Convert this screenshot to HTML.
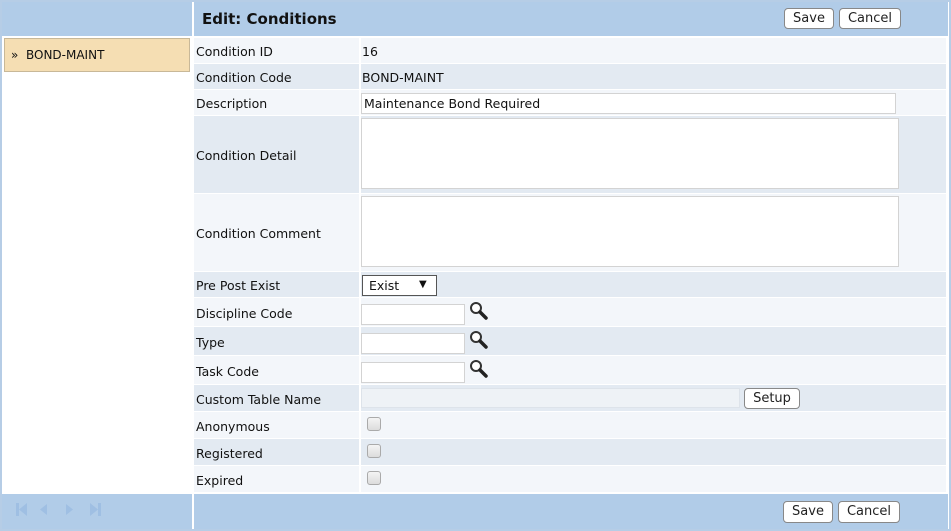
<!DOCTYPE html><html><head><style>
*{box-sizing:border-box}
body{margin:0;width:951px;height:531px;background:#fff;font-family:"DejaVu Sans",Verdana,sans-serif;font-size:12.5px;color:#111;position:relative;overflow:hidden}
.a{position:absolute}
.L{background:#f3f6fa}.D{background:#e3eaf2}
.lab{position:absolute;left:196px;margin-top:1px}
.v{margin-top:1px}
.btn{position:absolute;border:1px solid #888;border-radius:4px;background:#fff;font-size:13px;text-align:center;line-height:20px;color:#222}
.inp{position:absolute;border:1px solid #d3d3d3;background:#fff}
.cb{position:absolute;left:367px;width:14px;height:14px;border:1px solid #aaa;border-radius:3px;background:linear-gradient(#f4f4f4,#dcdcdc)}
</style></head><body>
<div class="a" style="left:0;top:0;width:951px;height:531px;border:2px solid #b6cde6"></div>
<div class="a" style="left:2px;top:2px;width:190px;height:34px;background:#b1cce8"></div>
<div class="a" style="left:194px;top:2px;width:754px;height:34px;background:#b1cce8"></div>
<div class="a" style="left:202px;top:10px;font-weight:bold;font-size:15px">Edit: Conditions</div>
<div class="btn" style="left:784px;top:8px;width:50px;height:21px">Save</div>
<div class="btn" style="left:839px;top:8px;width:62px;height:21px">Cancel</div>
<div class="a" style="left:4px;top:38px;width:186px;height:34px;background:#f5deb3;border:1px solid #c8b898"></div>
<div class="a" style="left:11px;top:48px;font-size:12px">»&nbsp; BOND-MAINT</div>
<div class="a" style="left:2px;top:494px;width:190px;height:35px;background:#b1cce8"></div>
<div class="a" style="left:194px;top:494px;width:754px;height:35px;background:#b1cce8"></div>
<svg class="a" style="left:14px;top:502px" width="90" height="16"><g fill="#9fbfe3"><rect x="2" y="1" width="3" height="13"/><path d="M13 1V14L5 7.5Z"/><path d="M33 2V13L26 7.5Z"/><path d="M52 2V13L59 7.5Z"/><path d="M76 1V14L84 7.5Z"/><rect x="84" y="1" width="3" height="13"/></g></svg>
<div class="btn" style="left:783px;top:501px;width:50px;height:22px">Save</div>
<div class="btn" style="left:838px;top:501px;width:62px;height:22px">Cancel</div>

<div class="a L" style="left:194px;top:38px;width:165px;height:25px"></div><div class="a L" style="left:361px;top:38px;width:585px;height:25px"></div>
<div class="a D" style="left:194px;top:64px;width:165px;height:25px"></div><div class="a D" style="left:361px;top:64px;width:585px;height:25px"></div>
<div class="a L" style="left:194px;top:90px;width:165px;height:25px"></div><div class="a L" style="left:361px;top:90px;width:585px;height:25px"></div>
<div class="a D" style="left:194px;top:116px;width:165px;height:77px"></div><div class="a D" style="left:361px;top:116px;width:585px;height:77px"></div>
<div class="a L" style="left:194px;top:194px;width:165px;height:77px"></div><div class="a L" style="left:361px;top:194px;width:585px;height:77px"></div>
<div class="a D" style="left:194px;top:272px;width:165px;height:25px"></div><div class="a D" style="left:361px;top:272px;width:585px;height:25px"></div>
<div class="a L" style="left:194px;top:298px;width:165px;height:28px"></div><div class="a L" style="left:361px;top:298px;width:585px;height:28px"></div>
<div class="a D" style="left:194px;top:327px;width:165px;height:28px"></div><div class="a D" style="left:361px;top:327px;width:585px;height:28px"></div>
<div class="a L" style="left:194px;top:356px;width:165px;height:28px"></div><div class="a L" style="left:361px;top:356px;width:585px;height:28px"></div>
<div class="a D" style="left:194px;top:385px;width:165px;height:26px"></div><div class="a D" style="left:361px;top:385px;width:585px;height:26px"></div>
<div class="a L" style="left:194px;top:412px;width:165px;height:26px"></div><div class="a L" style="left:361px;top:412px;width:585px;height:26px"></div>
<div class="a D" style="left:194px;top:439px;width:165px;height:26px"></div><div class="a D" style="left:361px;top:439px;width:585px;height:26px"></div>
<div class="a L" style="left:194px;top:466px;width:165px;height:26px"></div><div class="a L" style="left:361px;top:466px;width:585px;height:26px"></div>

<div class="lab" style="top:43px">Condition ID</div><div class="a v" style="left:362px;top:43px">16</div>
<div class="lab" style="top:69px">Condition Code</div><div class="a v" style="left:362px;top:69px">BOND-MAINT</div>
<div class="lab" style="top:95px">Description</div>
<div class="inp" style="left:361px;top:93px;width:535px;height:21px;padding:2px 0 0 2px">Maintenance Bond Required</div>
<div class="lab" style="top:147px">Condition Detail</div>
<div class="inp" style="left:361px;top:118px;width:538px;height:71px"></div>
<div class="lab" style="top:225px">Condition Comment</div>
<div class="inp" style="left:361px;top:196px;width:538px;height:71px"></div>
<div class="lab" style="top:277px">Pre Post Exist</div>
<div class="a" style="left:362px;top:275px;width:75px;height:21px;border:1px solid #555;background:#fff;padding:2px 0 0 6px">Exist<span style="position:absolute;left:56px;top:3px;font-size:10px">▼</span></div>
<div class="lab" style="top:305px">Discipline Code</div>
<div class="inp" style="left:361px;top:304px;width:104px;height:21px"></div>
<div class="lab" style="top:334px">Type</div>
<div class="inp" style="left:361px;top:333px;width:104px;height:21px"></div>
<div class="lab" style="top:363px">Task Code</div>
<div class="inp" style="left:361px;top:362px;width:104px;height:21px"></div>
<svg class="a" style="left:469px;top:301px" width="20" height="20"><circle cx="7" cy="7" r="5" fill="#fff" stroke="#333" stroke-width="2"/><path d="M11 11L17 17" stroke="#222" stroke-width="3.5" stroke-linecap="round"/></svg>
<svg class="a" style="left:469px;top:330px" width="20" height="20"><circle cx="7" cy="7" r="5" fill="#fff" stroke="#333" stroke-width="2"/><path d="M11 11L17 17" stroke="#222" stroke-width="3.5" stroke-linecap="round"/></svg>
<svg class="a" style="left:469px;top:359px" width="20" height="20"><circle cx="7" cy="7" r="5" fill="#fff" stroke="#333" stroke-width="2"/><path d="M11 11L17 17" stroke="#222" stroke-width="3.5" stroke-linecap="round"/></svg>
<div class="lab" style="top:391px">Custom Table Name</div>
<div class="inp" style="left:361px;top:388px;width:379px;height:20px;background:#eef2f6;border-color:#dde3ea"></div>
<div class="btn" style="left:744px;top:388px;width:56px;height:21px">Setup</div>
<div class="lab" style="top:418px">Anonymous</div><div class="cb" style="top:417px"></div>
<div class="lab" style="top:445px">Registered</div><div class="cb" style="top:444px"></div>
<div class="lab" style="top:472px">Expired</div><div class="cb" style="top:471px"></div>
</body></html>
